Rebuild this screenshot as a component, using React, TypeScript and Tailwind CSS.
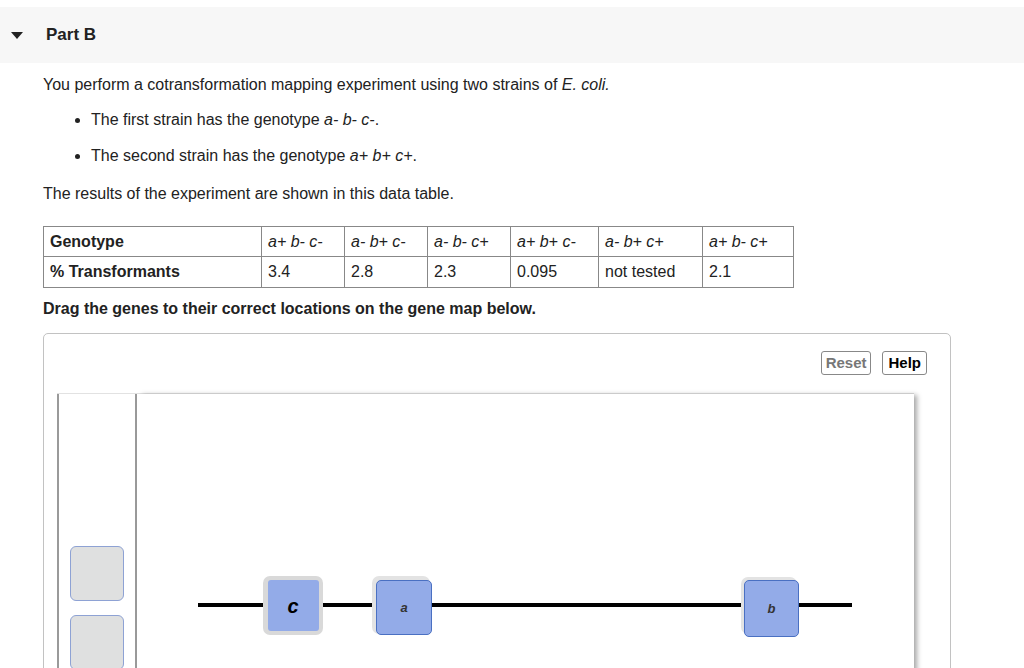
const GENOTYPES = ["a+ b- c-", "a- b+ c-", "a- b- c+", "a+ b+ c-", "a- b+ c+", "a+ b- c+"];
const VALUES = ["3.4", "2.8", "2.3", "0.095", "not tested", "2.1"];
const COL_WIDTHS = [83, 83, 83, 88, 104, 91];

export default function App() {
  return (
    <div className="h-[668px] w-full overflow-hidden bg-white text-[#222] font-['Liberation_Sans',Arial,sans-serif]">
      {/* header */}
      <div className="mt-[7px] h-[56px] bg-[#f7f7f7] flex items-center">
        <svg width="12" height="7" viewBox="0 0 12 7" className="ml-[11px]">
          <path d="M0 0 L12 0 L6 7 Z" fill="#222" />
        </svg>
        <span className="ml-[23px] text-[17px] font-bold text-[#222]">Part B</span>
      </div>

      <div className="pl-[43px]">
        <p className="mt-[11px] text-[16px] leading-[22px]">
          You perform a cotransformation mapping experiment using two strains of <i>E. coli.</i>
        </p>
        <ul className="mt-[13px] pl-[48px] list-disc text-[16px] leading-[22px] flex flex-col gap-[14px]">
          <li>The first strain has the genotype <i>a- b- c-</i>.</li>
          <li>The second strain has the genotype <i>a+ b+ c+</i>.</li>
        </ul>
        <p className="mt-[16px] text-[16px] leading-[22px]">The results of the experiment are shown in this data table.</p>

        <table className="mt-[21px] border-collapse border border-[#333] text-[16px]">
          <tbody>
            <tr className="h-[30px]">
              <td className="w-[218px] border border-[#888] px-[6px] font-bold">Genotype</td>
              {GENOTYPES.map((g, i) => (
                <td key={g} style={{ width: COL_WIDTHS[i] }} className="border border-[#888] px-[6px] italic">
                  {g}
                </td>
              ))}
            </tr>
            <tr className="h-[31px]">
              <td className="border border-[#888] px-[6px] font-bold">% Transformants</td>
              {VALUES.map((v) => (
                <td key={v} className="border border-[#888] px-[6px]">
                  {v}
                </td>
              ))}
            </tr>
          </tbody>
        </table>

        <p className="mt-[12px] text-[16px] leading-[18px] font-bold">Drag the genes to their correct locations on the gene map below.</p>

        {/* activity panel */}
        <div className="mt-[15px] w-[908px] h-[400px] border border-[#c2c2c2] rounded-[5px] bg-white">
          <div className="flex justify-end gap-[11px] pt-[17px] pr-[23px]">
            <button className="h-[24px] px-[4px] border border-[#888] rounded-[3px] text-[15px] font-bold text-[#777]">Reset</button>
            <button className="h-[24px] px-[5px] border border-[#888] rounded-[3px] text-[15px] font-bold text-black">Help</button>
          </div>

          <div className="mt-[18px] ml-[13px] w-[857px] h-[320px] flex border-t border-[#e2e2e2]">
            {/* tray */}
            <div className="w-[80px] border-l-2 border-r-2 border-[#9a9a9a] flex flex-col items-center pt-[152px] gap-[14px]">
              <div className="w-[54px] h-[55px] rounded-[6px] bg-[#dfe0e0] border border-[#8ea2d4]" />
              <div className="w-[54px] h-[55px] rounded-[6px] bg-[#dfe0e0] border border-[#8ea2d4]" />
            </div>

            {/* canvas */}
            <div className="relative flex-1 shadow-[4px_0_5px_-1px_rgba(0,0,0,0.35)]">
              <div className="absolute left-[61px] top-[209px] w-[654px] h-[4px] bg-black" />

              {/* gene c */}
              <div className="absolute left-[126px] top-[182px] w-[60px] h-[59px] rounded-[7px] bg-[#d9d9d9] flex items-center justify-center">
                <div className="w-[51px] h-[51px] rounded-[3px] bg-[#93abe8] flex items-center justify-center">
                  <span className="text-[20px] font-bold italic text-black">c</span>
                </div>
              </div>

              {/* gene a */}
              <div className="absolute left-[235px] top-[182px] w-[58px] h-[58px] rounded-[7px] bg-[#e3e3e3]" />
              <div className="absolute left-[239px] top-[186px] w-[56px] h-[55px] rounded-[5px] bg-[#93abe8] border border-[#4a70c2] flex items-center justify-center">
                <span className="text-[13px] font-bold italic text-[#333]">a</span>
              </div>

              {/* gene b */}
              <div className="absolute left-[604px] top-[183px] w-[56px] h-[57px] rounded-[7px] bg-[#e3e3e3]" />
              <div className="absolute left-[607px] top-[186px] w-[55px] h-[57px] rounded-[5px] bg-[#93abe8] border border-[#4a70c2] flex items-center justify-center">
                <span className="text-[13px] font-bold italic text-[#333]">b</span>
              </div>
            </div>
          </div>
        </div>
      </div>
    </div>
  );
}
